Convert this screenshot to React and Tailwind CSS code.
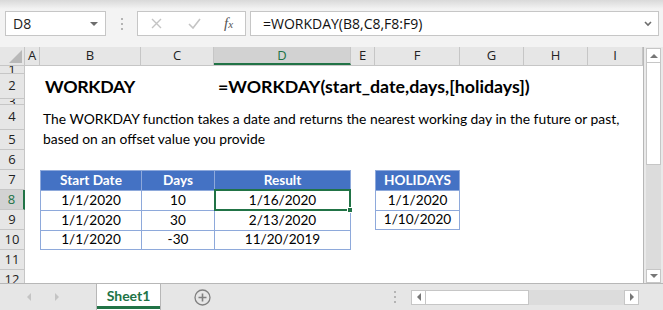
import React from 'react';

const COLS = [
  { k: 'A', w: 'w-[15px]' },
  { k: 'B', w: 'w-[101px]' },
  { k: 'C', w: 'w-[73px]' },
  { k: 'D', w: 'w-[137px]' },
  { k: 'E', w: 'w-[24px]' },
  { k: 'F', w: 'w-[85px]' },
  { k: 'G', w: 'w-[64px]' },
  { k: 'H', w: 'w-[64px]' },
  { k: 'I', w: 'w-[55px]' },
];

const ROWS = [
  { n: 1, h: 'h-[8px]' },
  { n: 2, h: 'h-[25px]' },
  { n: 3, h: 'h-[6px]' },
  { n: 4, h: 'h-[25px]' },
  { n: 5, h: 'h-[20px]' },
  { n: 6, h: 'h-[20px]' },
  { n: 7, h: 'h-[20px]' },
  { n: 8, h: 'h-[20px]' },
  { n: 9, h: 'h-[20px]' },
  { n: 10, h: 'h-[20px]' },
  { n: 11, h: 'h-[20px]' },
  { n: 12, h: 'h-[20px]' },
];

const th = 'justify-center bg-[#4472c4] text-white font-bold border-l border-t border-[#8ea9db]';
const td = 'justify-center border-l border-t border-[#8ea9db]';

// cell contents keyed by row then column
const CELLS = {
  2: {
    B: { c: <span className="text-[17.8px] font-bold tracking-[-0.3px]">WORKDAY</span>, cls: 'pl-[5px] pb-[2px]' },
    D: { c: <span className="text-[17.8px] font-bold">=WORKDAY(start_date,days,[holidays])</span>, cls: 'pl-[4px] pb-[2px]' },
  },
  4: {
    B: { c: <span className="text-[13.85px]">The WORKDAY function takes a date and returns the nearest working day in the future or past,</span>, cls: 'pl-[3px]' },
  },
  5: {
    B: { c: <span className="text-[13.85px]">based on an offset value you provide</span>, cls: 'pl-[3px]' },
  },
  7: {
    B: { c: 'Start Date', cls: th },
    C: { c: 'Days', cls: th },
    D: { c: 'Result', cls: th + ' border-r' },
    F: { c: 'HOLIDAYS', cls: th + ' border-r' },
  },
  8: {
    B: { c: '1/1/2020', cls: td },
    C: { c: '10', cls: td },
    D: { c: '1/16/2020', cls: td + ' border-r', sel: true },
    F: { c: '1/1/2020', cls: td + ' border-r' },
  },
  9: {
    B: { c: '1/1/2020', cls: td },
    C: { c: '30', cls: td },
    D: { c: '2/13/2020', cls: td + ' border-r' },
    F: { c: '1/10/2020', cls: td + ' border-r border-b' },
  },
  10: {
    B: { c: '1/1/2020', cls: td + ' border-b' },
    C: { c: '-30', cls: td + ' border-b' },
    D: { c: '11/20/2019', cls: td + ' border-r border-b' },
  },
};

function Triangle({ dir, cls }) {
  const pts = {
    up: '0,6 4,2 8,6',
    down: '0,2 4,6 8,2',
    left: '6,0 2,4 6,8',
    right: '2,0 6,4 2,8',
  };
  return (
    <svg width="8" height="8" viewBox="0 0 8 8" className={cls}>
      <polygon points={pts[dir]} fill="currentColor" />
    </svg>
  );
}

function Dots() {
  return (
    <div className="flex flex-col gap-[3px]">
      <div className="w-[2px] h-[2px] bg-[#b4b4b4]" />
      <div className="w-[2px] h-[2px] bg-[#b4b4b4]" />
      <div className="w-[2px] h-[2px] bg-[#b4b4b4]" />
    </div>
  );
}

function FormulaBar() {
  return (
    <div className="h-[47px] bg-[#f3f3f3] shrink-0">
      <div className="h-[9px] bg-gradient-to-b from-[#d9d9d9] to-[#f3f3f3]" />
      <div className="flex items-center h-[25px] mt-[2px]">
        <div className="ml-[5px] w-[101px] h-full bg-white border border-[#c6c6c6] flex items-center justify-between pl-[7px] pr-[7px] text-[14px] text-[#222]">
          <span>D8</span>
          <Triangle dir="down" cls="text-[#6d6d6d]" />
        </div>
        <div className="ml-[15px]">
          <Dots />
        </div>
        <div className="ml-[14px] w-[109px] h-full bg-white border border-[#c6c6c6] flex items-center">
          <svg width="11" height="11" viewBox="0 0 11 11" className="ml-[13px]">
            <path d="M1 1 L10 10 M10 1 L1 10" stroke="#c4c4c4" strokeWidth="1.4" />
          </svg>
          <svg width="13" height="11" viewBox="0 0 13 11" className="ml-[26px]">
            <path d="M1 6 L5 10 L12 1" stroke="#c4c4c4" strokeWidth="1.6" fill="none" />
          </svg>
          <span className="ml-[23px] italic text-[#555] text-[15px] font-['Liberation_Serif',serif] leading-none">
            f<span className="text-[11px]">x</span>
          </span>
        </div>
        <div className="ml-[4px] w-[409px] h-full bg-white border border-[#c6c6c6] flex items-center justify-between pl-[12px] pr-[6px] text-[14px] text-[#111]">
          <span>=WORKDAY(B8,C8,F8:F9)</span>
          <svg width="8" height="6" viewBox="0 0 8 6">
            <path d="M1 1 L4 4 L7 1" stroke="#6d6d6d" strokeWidth="1.6" fill="none" />
          </svg>
        </div>
      </div>
    </div>
  );
}

function ColumnHeaders() {
  return (
    <div className="flex h-[19px] shrink-0 bg-[#e6e6e6] border-b border-[#c6c6c6]">
      <div className="w-[25px] shrink-0 h-full border-r border-[#c6c6c6] flex items-end justify-end pr-[2px] pb-[2px]">
        <svg width="13" height="13" viewBox="0 0 13 13">
          <polygon points="13,0 13,13 0,13" fill="#b8b8b8" />
        </svg>
      </div>
      {COLS.map((c) => (
        <div
          key={c.k}
          className={
            c.k === 'D'
              ? `${c.w} shrink-0 h-full border-r border-[#c6c6c6] bg-[#d2d2d2] border-b-2 border-b-[#217346] text-[#217346] flex items-center justify-center pt-[1px]`
              : `${c.w} shrink-0 h-full border-r border-[#c6c6c6] flex items-center justify-center text-[#222]`
          }
        >
          {c.k}
        </div>
      ))}
    </div>
  );
}

function Row({ r }) {
  const data = CELLS[r.n] || {};
  const active = r.n === 8;
  return (
    <div className={`flex ${r.h} shrink-0`}>
      <div
        className={
          active
            ? 'w-[25px] shrink-0 h-full overflow-hidden bg-[#d2d2d2] border-b border-[#c6c6c6] border-r-2 border-r-[#217346] text-[#217346] flex items-center justify-center font-["Open_Sans",sans-serif] text-[13px]'
            : 'w-[25px] shrink-0 h-full overflow-hidden bg-[#e6e6e6] border-b border-r border-[#c6c6c6] text-[#222] flex items-center justify-center font-["Open_Sans",sans-serif] text-[13px]'
        }
      >
        {r.n}
      </div>
      {COLS.map((c) => {
        const cell = data[c.k];
        return (
          <div
            key={c.k}
            className={`${c.w} shrink-0 h-full flex items-end pb-[2px] whitespace-nowrap relative ${cell ? cell.cls : ''}`}
          >
            {cell && cell.c}
            {cell && cell.sel && (
              <div className="absolute z-10 -top-[2px] -left-[1px] -right-[1px] -bottom-[1px] border-2 border-[#217346]">
                <div className="absolute -right-[4px] -bottom-[4px] w-[6px] h-[6px] bg-[#217346] border border-white" />
              </div>
            )}
          </div>
        );
      })}
    </div>
  );
}

function VScroll() {
  return (
    <div className="w-[19px] shrink-0 bg-[#e9e9e9] flex flex-col items-center pt-[1px]">
      <div className="w-[15px] h-[15px] bg-white border border-[#c6c6c6] flex items-center justify-center text-[#777]">
        <Triangle dir="up" />
      </div>
      <div className="w-[15px] h-[102px] bg-white border-x border-b border-[#c6c6c6]" />
      <div className="w-[15px] flex-1 bg-[#dcdcdc]" />
      <div className="w-[15px] h-[14px] bg-white border border-[#c6c6c6] flex items-center justify-center text-[#777]">
        <Triangle dir="down" />
      </div>
    </div>
  );
}

function TabBar() {
  return (
    <div className="h-[27px] shrink-0 bg-[#e6e6e6] border-t border-[#b7b7b7] flex items-stretch">
      <div className="flex items-center ml-[25px] gap-[20px] text-[#c4c4c4]">
        <Triangle dir="left" />
        <Triangle dir="right" />
      </div>
      <div className="ml-[35px] w-[65px] bg-white border-x border-[#b7b7b7] flex flex-col">
        <div className="flex-1 flex items-center justify-center text-[#217346] font-bold text-[14px] font-['Lato',sans-serif]">
          Sheet1
        </div>
        <div className="h-[3px] bg-[#217346] mb-[1px]" />
      </div>
      <div className="ml-[33px] flex items-center">
        <svg width="17" height="17" viewBox="0 0 17 17">
          <circle cx="8.5" cy="8.5" r="7.5" stroke="#808080" strokeWidth="1.3" fill="none" />
          <path d="M8.5 4.5 V12.5 M4.5 8.5 H12.5" stroke="#808080" strokeWidth="1.6" />
        </svg>
      </div>
      <div className="ml-[183px] flex items-center">
        <Dots />
      </div>
      <div className="ml-[15px] flex items-center">
        <div className="flex h-[15px]">
          <div className="w-[15px] h-full bg-white border border-[#c6c6c6] flex items-center justify-center text-[#777]">
            <Triangle dir="left" />
          </div>
          <div className="w-[103px] h-full bg-white border-y border-r border-[#c6c6c6]" />
          <div className="w-[95px] h-full bg-[#dcdcdc]" />
          <div className="w-[15px] h-full bg-white border border-[#c6c6c6] flex items-center justify-center text-[#777]">
            <Triangle dir="right" />
          </div>
        </div>
      </div>
    </div>
  );
}

export default function App() {
  return (
    <div className="w-[663px] h-[310px] overflow-hidden flex flex-col bg-[#e6e6e6] font-['Open_Sans',sans-serif] text-[13px]">
      <FormulaBar />
      <div className="flex h-[236px] shrink-0">
        <div className="w-[644px] shrink-0 h-full overflow-hidden bg-white border-r border-[#b7b7b7] flex flex-col">
          <ColumnHeaders />
          <div className="flex flex-col font-['Lato',sans-serif] text-[13.6px] text-black leading-[1.2]">
            {ROWS.map((r) => (
              <Row key={r.n} r={r} />
            ))}
          </div>
        </div>
        <VScroll />
      </div>
      <TabBar />
    </div>
  );
}
